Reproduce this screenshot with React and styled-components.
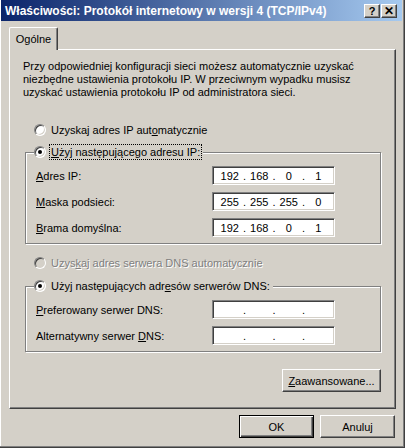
import React from "react";
import styled, { createGlobalStyle, css } from "styled-components";

const Global = createGlobalStyle`
  html, body { margin: 0; padding: 0; background: #d4d0c8; }
  * { box-sizing: border-box; }
  body { font-family: "Liberation Sans", Arial, sans-serif; font-size: 11px; color: #000; }
`;

const Window = styled.div`
  width: 405px;
  height: 448px;
  background: #d4d0c8;
  padding: 0 2px 2px 1px;
  border-right: 1px solid #404040;
  border-bottom: 1px solid #404040;
  box-shadow: inset -1px -1px 0 #808080, inset 1px 0 0 #ffffff;
  display: flex;
  flex-direction: column;
`;

const TitleBar = styled.div`
  height: 21px;
  flex: none;
  display: flex;
  align-items: center;
  padding: 0 5px 0 4px;
  background: linear-gradient(to right, #0a246a, #a6caf0);
`;

const Title = styled.div`
  flex: 1;
  color: #fff;
  font-weight: bold;
  font-size: 12px;
  white-space: nowrap;
`;

const TitleButtons = styled.div`
  display: flex;
  gap: 1px;
  margin-top: 1px;
`;

const TitleButton = styled.div`
  width: 16px;
  height: 14px;
  background: #d4d0c8;
  border-top: 1px solid #fff;
  border-left: 1px solid #fff;
  border-right: 1px solid #404040;
  border-bottom: 1px solid #404040;
  box-shadow: inset -1px -1px 0 #808080;
  display: flex;
  align-items: center;
  justify-content: center;
  font-weight: bold;
  font-size: ${(p) => p.$size || 11}px;
  line-height: 1;
  color: #000;
`;

const Body = styled.div`
  flex: 1;
  display: flex;
  flex-direction: column;
  padding: 6px 6px 0 8px;
`;

const TabStrip = styled.div`
  display: flex;
  height: 23px;
  position: relative;
  z-index: 1;
`;

const Tab = styled.div`
  width: 49px;
  height: 23px;
  background: #d4d0c8;
  border-top: 1px solid #fff;
  border-left: 1px solid #fff;
  border-right: 1px solid #404040;
  border-top-left-radius: 2px;
  border-top-right-radius: 2px;
  box-shadow: inset -1px 0 0 #808080;
  display: flex;
  align-items: center;
  justify-content: center;
  padding-bottom: 1px;
`;

const Panel = styled.div`
  height: 360px;
  margin-top: -1px;
  border-top: 1px solid #fff;
  border-left: 1px solid #fff;
  border-right: 1px solid #404040;
  border-bottom: 1px solid #404040;
  box-shadow: inset -1px -1px 0 #808080;
  padding: 10px 14px 0 13px;
  display: flex;
  flex-direction: column;
`;

const Para = styled.p`
  margin: 0;
  line-height: 13px;
  white-space: nowrap;
`;

const RadioRow = styled.label`
  display: flex;
  align-items: center;
  height: 16px;
  gap: 4px;
  padding-left: ${(p) => p.$indent || 0}px;
  margin-top: ${(p) => p.$mt || 0}px;
  color: ${(p) => (p.$disabled ? "#808080" : "#000")};
  text-shadow: ${(p) => (p.$disabled ? "1px 1px 0 #fff" : "none")};
  white-space: nowrap;
`;

const RadioCircle = styled.span`
  width: 12px;
  height: 12px;
  flex: none;
  border-radius: 50%;
  background: ${(p) => (p.$disabled ? "#d4d0c8" : "#fff")};
  border: 1px solid;
  border-color: #808080 #fff #fff #808080;
  box-shadow: inset 1px 1px 0 #404040, inset -1px -1px 0 #d4d0c8;
  display: flex;
  align-items: center;
  justify-content: center;
  ${(p) =>
    p.$checked &&
    css`
      &::after {
        content: "";
        width: 4px;
        height: 4px;
        border-radius: 50%;
        background: #000;
      }
    `}
`;

const RadioText = styled.span`
  padding: 0 1px;
  line-height: 14px;
  border: 1px ${(p) => (p.$focus ? "dotted #000" : "solid transparent")};
  margin-left: -1px;
`;

const Group = styled.fieldset`
  margin: ${(p) => p.$mt || 0}px 0 0 2px;
  padding: 6px 10px 6px 10px;
  border: 1px solid #808080;
  box-shadow: 1px 1px 0 #fff, inset 1px 1px 0 #fff;
  min-width: 0;
`;

const Legend = styled.legend`
  padding: 0 1px 0 0;
  margin-left: -2px;
  background: #d4d0c8;
`;

const Fields = styled.div`
  display: grid;
  grid-template-columns: 176px 123px;
  row-gap: 7px;
  align-items: center;
`;

const IpBox = styled.div`
  height: 19px;
  background: #fff;
  border-top: 1px solid #808080;
  border-left: 1px solid #808080;
  border-right: 1px solid #fff;
  border-bottom: 1px solid #fff;
  box-shadow: inset 1px 1px 0 #404040, inset -1px -1px 0 #d4d0c8;
  display: flex;
  align-items: center;
  padding: 0 3px 0 4px;
`;

const Seg = styled.span`
  flex: 1;
  text-align: center;
`;

const Dot = styled.span`
  width: 4px;
  text-align: center;
`;

const Btn = styled.button`
  width: ${(p) => p.$w || 75}px;
  height: 23px;
  font-family: inherit;
  font-size: 11px;
  color: #000;
  background: #d4d0c8;
  padding: 0;
  border-top: 1px solid #fff;
  border-left: 1px solid #fff;
  border-right: 1px solid #404040;
  border-bottom: 1px solid #404040;
  box-shadow: inset -1px -1px 0 #808080;
  ${(p) =>
    p.$default &&
    css`
      border: 1px solid #000;
      box-shadow: inset 1px 1px 0 #fff, inset -1px -1px 0 #404040, inset -2px -2px 0 #808080;
    `}
`;

const AdvRow = styled.div`
  display: flex;
  justify-content: flex-end;
  margin-top: 17px;
`;

const Footer = styled.div`
  display: flex;
  justify-content: flex-end;
  gap: 6px;
  margin: 6px 1px 0 0;
`;

const Ip = ({ parts }) => (
  <IpBox>
    <Seg>{parts[0]}</Seg>
    <Dot>.</Dot>
    <Seg>{parts[1]}</Seg>
    <Dot>.</Dot>
    <Seg>{parts[2]}</Seg>
    <Dot>.</Dot>
    <Seg>{parts[3]}</Seg>
  </IpBox>
);

export default function App() {
  return (
    <>
      <Global />
      <Window>
        <TitleBar>
          <Title>Właściwości: Protokół internetowy w wersji 4 (TCP/IPv4)</Title>
          <TitleButtons>
            <TitleButton>?</TitleButton>
            <TitleButton $size={12}>✕</TitleButton>
          </TitleButtons>
        </TitleBar>
        <Body>
          <TabStrip>
            <Tab>Ogólne</Tab>
          </TabStrip>
          <Panel>
            <Para>
              Przy odpowiedniej konfiguracji sieci możesz automatycznie uzyskać
              <br />
              niezbędne ustawienia protokołu IP. W przeciwnym wypadku musisz
              <br />
              uzyskać ustawienia protokołu IP od administratora sieci.
            </Para>
            <RadioRow $indent={11} $mt={23}>
              <RadioCircle />
              <RadioText>
                Uzyskaj adres IP aut<u>o</u>matycznie
              </RadioText>
            </RadioRow>
            <Group $mt={6}>
              <Legend>
                <RadioRow>
                  <RadioCircle $checked />
                  <RadioText $focus>
                    <u>U</u>żyj następującego adresu IP:
                  </RadioText>
                </RadioRow>
              </Legend>
              <Fields>
                <span>
                  <u>A</u>dres IP:
                </span>
                <Ip parts={["192", "168", "0", "1"]} />
                <span>
                  <u>M</u>aska podsieci:
                </span>
                <Ip parts={["255", "255", "255", "0"]} />
                <span>
                  <u>B</u>rama domyślna:
                </span>
                <Ip parts={["192", "168", "0", "1"]} />
              </Fields>
            </Group>
            <RadioRow $indent={11} $mt={11} $disabled>
              <RadioCircle $disabled />
              <RadioText>
                Uzys<u>k</u>aj adres serwera DNS automatycznie
              </RadioText>
            </RadioRow>
            <Group $mt={7}>
              <Legend>
                <RadioRow>
                  <RadioCircle $checked />
                  <RadioText>
                    Użyj następujących adr<u>e</u>sów serwerów DNS:
                  </RadioText>
                </RadioRow>
              </Legend>
              <Fields>
                <span>
                  <u>P</u>referowany serwer DNS:
                </span>
                <Ip parts={["", "", "", ""]} />
                <span>
                  Alternatywny serwer <u>D</u>NS:
                </span>
                <Ip parts={["", "", "", ""]} />
              </Fields>
            </Group>
            <AdvRow>
              <Btn $w={99}>
                <u>Z</u>aawansowane...
              </Btn>
            </AdvRow>
          </Panel>
          <Footer>
            <Btn $default>OK</Btn>
            <Btn>Anuluj</Btn>
          </Footer>
        </Body>
      </Window>
    </>
  );
}
